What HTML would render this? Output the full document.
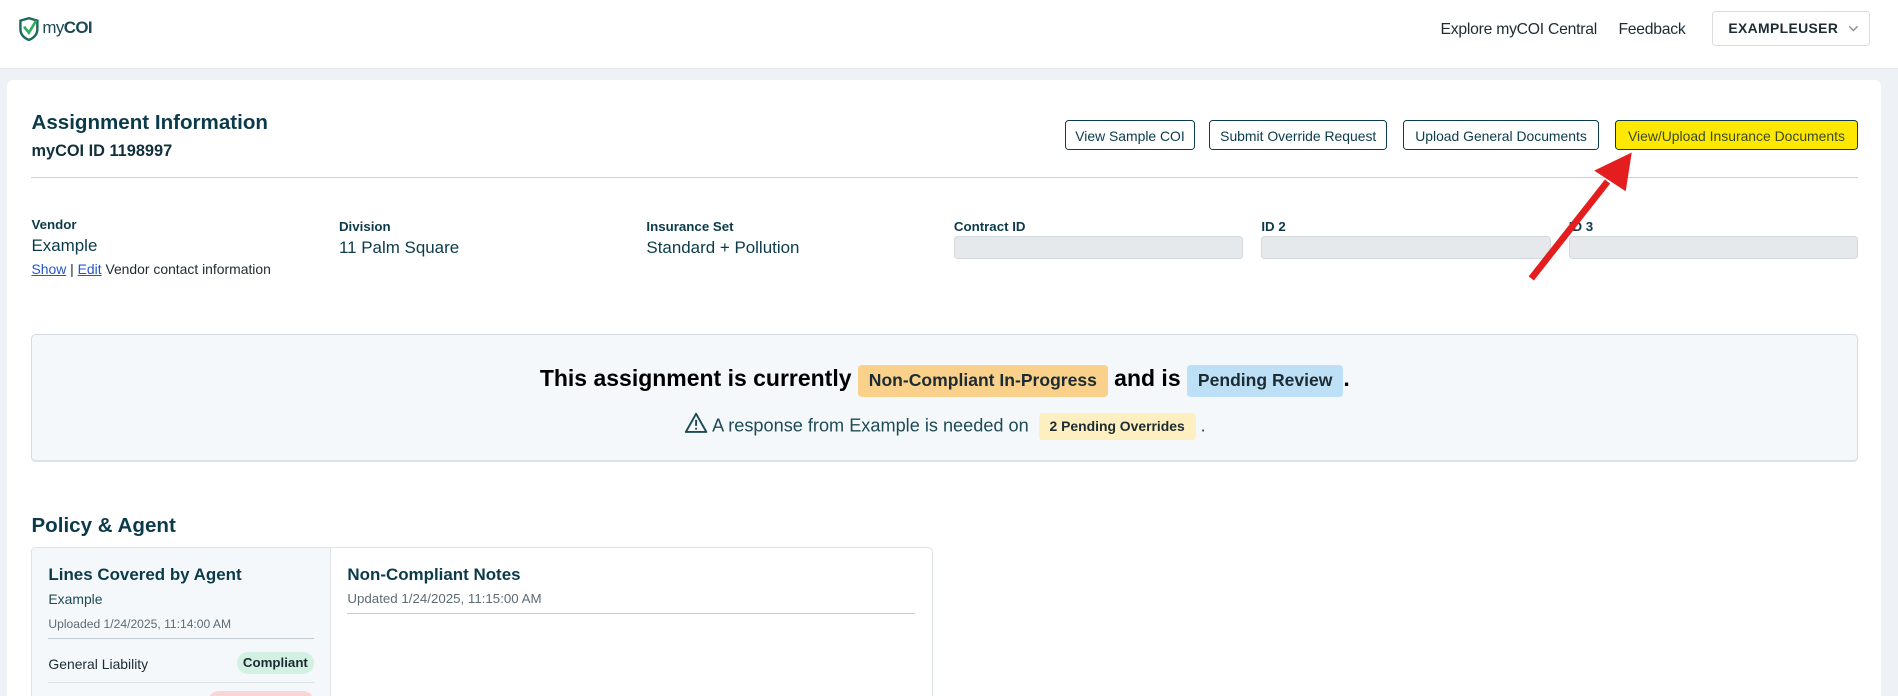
<!DOCTYPE html>
<html><head><meta charset="utf-8"><style>
html,body{margin:0;padding:0;background:#eef1f5;overflow:hidden}
body{width:1568px;height:575px;zoom:1.2105;font-family:"Liberation Sans",sans-serif;color:#0b3b4a;position:relative}
.abs{position:absolute}
.hdr{left:0;top:0;width:1568px;height:56px;background:#fff;border-bottom:1px solid #e3e7eb}
.card{left:6px;top:66px;width:1548px;height:520px;background:#fff;border-radius:5px}
.btn{position:absolute;top:99px;height:25px;border:1px solid #0b3b4a;border-radius:3px;font-size:11.5px;line-height:25px;text-align:center;color:#0b3b4a;background:#fff;box-sizing:border-box}
.lbl{position:absolute;top:179px;font-size:11px;font-weight:bold;color:#0b3b4a}
.val{position:absolute;top:197px;font-size:14px;color:#0b3b4a}
.inp{position:absolute;top:195px;width:239px;height:19px;background:#e6e9ec;border:1px solid #d4d9de;border-radius:3px;box-sizing:border-box}
.badge{display:inline-block;border-radius:3px;padding:0 9px;font-weight:bold}
</style></head><body>
<div class="abs hdr">
  <svg class="abs" style="left:15px;top:14px" width="18" height="20" viewBox="0 0 18 20"><path d="M2 3 L9 1 L16 3 L16 10 Q16 16 9 19 Q2 16 2 10 Z" fill="none" stroke="#1d6a5e" stroke-width="2"/><path d="M5 8 L9 13 L15 3" fill="none" stroke="#2fae5b" stroke-width="2.2"/></svg>
  <div class="abs" style="left:35px;top:15px;font-size:14px;color:#1e4a56;letter-spacing:-0.5px">my<b>COI</b></div>
  <div class="abs" style="left:1190px;top:17px;font-size:13px;color:#1d2b33;letter-spacing:-0.2px">Explore myCOI Central</div>
  <div class="abs" style="left:1337px;top:17px;font-size:13px;color:#1d2b33;letter-spacing:-0.2px">Feedback</div>
  <div class="abs" style="left:1414px;top:9px;width:131px;height:29px;border:1px solid #d9dde1;border-radius:3px;box-sizing:border-box">
    <div class="abs" style="left:13px;top:7px;font-size:11.5px;font-weight:bold;color:#1d2b33;letter-spacing:0.3px">EXAMPLEUSER</div>
    <svg class="abs" style="left:112px;top:11px" width="9" height="6" viewBox="0 0 9 6"><path d="M1 1 L4.5 4.5 L8 1" fill="none" stroke="#8a959d" stroke-width="1.2"/></svg>
  </div>
</div>
<div class="abs card"></div>
<div class="abs" style="left:26px;top:92px;font-size:17px;font-weight:bold">Assignment Information</div>
<div class="abs" style="left:26px;top:117px;font-size:13.5px;font-weight:bold;color:#11303b">myCOI ID 1198997</div>
<div class="btn" style="left:880px;width:107px">View Sample COI</div>
<div class="btn" style="left:999px;width:147px">Submit Override Request</div>
<div class="btn" style="left:1159px;width:162px">Upload General Documents</div>
<div class="btn" style="left:1334px;width:201px;background:#ffe800;color:#3a4a2a">View/Upload Insurance Documents</div>
<div class="abs" style="left:26px;top:146px;width:1509px;height:1px;background:#c9d0d6"></div>

<div class="lbl" style="left:26px">Vendor</div>
<div class="abs" style="left:26px;top:195px;font-size:14px">Example</div>
<div class="abs" style="left:26px;top:216px;font-size:11.5px;color:#1d2b33"><span style="color:#2456c9;text-decoration:underline">Show</span> | <span style="color:#2456c9;text-decoration:underline">Edit</span> Vendor contact information</div>
<div class="lbl" style="left:280px;top:181px">Division</div>
<div class="val" style="left:280px">11 Palm Square</div>
<div class="lbl" style="left:534px;top:181px">Insurance Set</div>
<div class="val" style="left:534px">Standard + Pollution</div>
<div class="lbl" style="left:788px;top:181px">Contract ID</div>
<div class="inp" style="left:788px"></div>
<div class="lbl" style="left:1042px;top:181px">ID 2</div>
<div class="inp" style="left:1042px"></div>
<div class="lbl" style="left:1296px;top:181px">ID 3</div>
<div class="inp" style="left:1296px"></div>

<div class="abs" style="left:26px;top:276px;width:1509px;height:106px;background:#f5f8fb;border:1px solid #d5dbe1;border-bottom:2px solid #dde2e7;border-radius:4px;box-sizing:border-box"></div>
<div class="abs" style="left:26px;top:300px;width:1509px;text-align:center;font-size:19px;font-weight:bold;color:#000;line-height:26px">This assignment is currently <span class="badge" style="background:#f9d18b;font-size:14.5px;color:#1d2b33;line-height:26px">Non-Compliant In-Progress</span> and is <span class="badge" style="background:#bde0f7;font-size:14.5px;color:#1d2b33;line-height:26px">Pending Review</span>.</div>
<div class="abs" style="left:26px;top:340px;width:1509px;text-align:center;font-size:15px;color:#1e4a56;line-height:22px"><svg width="20" height="18" viewBox="0 0 20 18" style="vertical-align:-2px"><path d="M10 1.5 L18.5 16.5 L1.5 16.5 Z" fill="none" stroke="#1e4a56" stroke-width="1.6" stroke-linejoin="round"/><path d="M10 6.5 V11.5" stroke="#1e4a56" stroke-width="1.6"/><circle cx="10" cy="13.8" r="0.9" fill="#1e4a56"/></svg> A response from Example is needed on <span class="badge" style="background:#fdefbf;font-size:11.5px;color:#1d2b33;line-height:22px;margin-left:4px">2 Pending Overrides</span> .</div>

<div class="abs" style="left:26px;top:425px;font-size:17px;font-weight:bold">Policy &amp; Agent</div>
<div class="abs" style="left:26px;top:452px;width:745px;height:140px;border:1px solid #dde2e7;border-radius:4px;box-sizing:border-box;background:#fff;overflow:hidden">
  <div class="abs" style="left:0;top:0;width:246px;height:140px;background:#f5f8fb;border-right:1px solid #dde2e7"></div>
</div>
<div class="abs" style="left:40px;top:467px;font-size:14px;font-weight:bold">Lines Covered by Agent</div>
<div class="abs" style="left:40px;top:488px;font-size:11.5px;color:#1e4a56">Example</div>
<div class="abs" style="left:40px;top:510px;font-size:10px;color:#5d6b73">Uploaded 1/24/2025, 11:14:00 AM</div>
<div class="abs" style="left:40px;top:527px;width:219px;height:1px;background:#c3ccd3"></div>
<div class="abs" style="left:40px;top:542px;font-size:11.5px;color:#1d2b33">General Liability</div>
<div class="abs" style="left:196px;top:539px;width:63px;height:18px;border-radius:9px;background:#d3f1e2;font-size:11px;font-weight:bold;text-align:center;line-height:18px;color:#1d2b33">Compliant</div>
<div class="abs" style="left:40px;top:563px;width:219px;height:1px;background:#dde2e7"></div>
<div class="abs" style="left:172px;top:571px;width:87px;height:18px;border-radius:9px;background:#fbd5d5"></div>
<div class="abs" style="left:287px;top:467px;font-size:14px;font-weight:bold">Non-Compliant Notes</div>
<div class="abs" style="left:287px;top:488px;font-size:11px;color:#5d6b73">Updated 1/24/2025, 11:15:00 AM</div>
<div class="abs" style="left:287px;top:506px;width:469px;height:1px;background:#c3ccd3"></div>

<div class="abs" style="left:1555px;top:57px;width:13px;height:520px;background:#eef1f5"></div>

<svg class="abs" style="left:0;top:0" width="1568" height="575"><line x1="1265" y1="230" x2="1328" y2="150" stroke="#e41e1e" stroke-width="5.5"/><polygon points="1348,126 1317,141 1343,158" fill="#e41e1e"/></svg>
</body></html>
